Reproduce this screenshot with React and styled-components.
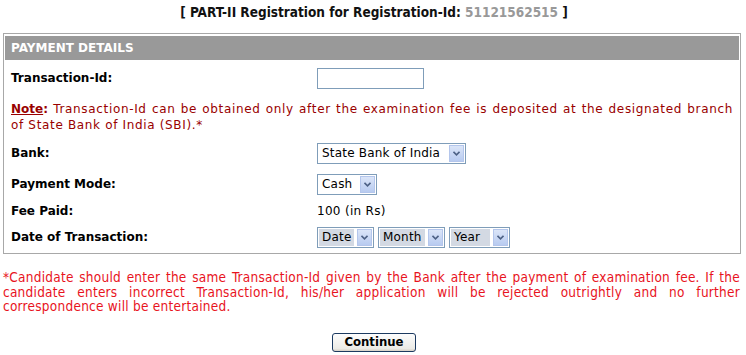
import React from "react";
import styled, { createGlobalStyle } from "styled-components";

const Global = createGlobalStyle`
  html, body { margin: 0; padding: 0; background: #fff; }
  body { font-family: "DejaVu Sans", Verdana, sans-serif; color: #000; }
`;

const Page = styled.div`
  width: 746px;
  padding: 3px 3px 0 3px;
  box-sizing: border-box;
`;

const Title = styled.div`
  text-align: center;
  font-family: "DejaVu Sans Condensed", "DejaVu Sans", sans-serif;
  font-weight: bold;
  font-size: 13.5px;
  line-height: 18px;
  color: #111;
  margin-left: 2px;
`;

const RegId = styled.span`
  color: #999;
`;

const Box = styled.div`
  margin-top: 12px;
  border: 1px solid #a8a8a8;
  padding: 2px 1px 0 1px;
  margin-right: 2px;
`;

const Header = styled.div`
  background: #999;
  color: #fff;
  font-weight: bold;
  font-size: 12px;
  height: 24px;
  line-height: 24px;
  padding-left: 6px;
`;

const Grid = styled.div`
  display: grid;
  grid-template-columns: 306px 1fr;
  padding: 5px 6px 1px 6px;
  align-items: center;
  font-size: 12px;
  letter-spacing: 0.3px;
`;

const Label = styled.div`
  font-weight: bold;
  letter-spacing: 0;
  height: ${(p) => p.$h || 26}px;
  display: flex;
  align-items: center;
`;

const Value = styled.div`
  height: ${(p) => p.$h || 26}px;
  display: flex;
  align-items: center;
  gap: 4px;
`;

const Note = styled.div`
  grid-column: 1 / -1;
  color: #990000;
  text-align: justify;
  line-height: 16px;
  letter-spacing: 0.66px;
  padding: 10px 0 5px 0;
`;

const NoteLead = styled.b`
  letter-spacing: 0;
`;

const TextInput = styled.input`
  width: 107px;
  height: 21px;
  box-sizing: border-box;
  border: 1px solid #7f9db9;
  margin: 0;
  padding: 0 2px;
`;

const SelectBox = styled.div`
  display: inline-flex;
  align-items: center;
  height: 21px;
  box-sizing: border-box;
  border: 1px solid #7f9db9;
  padding: 1px;
  background: #fff;
  font-size: 12px;
  letter-spacing: 0.2px;
  width: ${(p) => p.$w}px;
`;

const SelectText = styled.span`
  flex: 1;
  padding: 0 3px;
  line-height: 17px;
  background: ${(p) => (p.$hl ? "#d3d9e3" : "transparent")};
  margin-right: 3px;
  white-space: nowrap;
`;

const Arrow = styled.span`
  width: 15px;
  height: 17px;
  box-sizing: border-box;
  background: linear-gradient(#dbe5f8, #b8cbf0);
  border: 1px solid #b4c6ec;
  display: flex;
  align-items: center;
  justify-content: center;
`;

const Chevron = () => (
  <svg width="7" height="5" viewBox="0 0 7 5">
    <path d="M0.5 0.8 L3.5 3.8 L6.5 0.8" fill="none" stroke="#4d6185" strokeWidth="1.6" />
  </svg>
);

const Select = ({ w, children, hl }) => (
  <SelectBox $w={w}>
    <SelectText $hl={hl}>{children}</SelectText>
    <Arrow>
      <Chevron />
    </Arrow>
  </SelectBox>
);

const Footer = styled.div`
  margin-top: 16px;
  font-family: "DejaVu Sans Condensed", "DejaVu Sans", sans-serif;
  font-size: 13.5px;
  letter-spacing: 0.25px;
  line-height: 14.5px;
  color: #e8131d;
  text-align: justify;
  padding-right: 3px;
`;

const ButtonRow = styled.div`
  display: flex;
  justify-content: center;
  margin-top: 19px;
  padding-left: 2px;
`;

const Button = styled.button`
  width: 84px;
  height: 19px;
  font-family: "DejaVu Sans Condensed", "DejaVu Sans", sans-serif;
  font-weight: bold;
  font-size: 13px;
  color: #000;
  border: 1px solid #1c3a60;
  border-radius: 3px;
  background: linear-gradient(#fdfdfd, #ecebe6 85%, #d6d0c5);
  padding: 0;
  line-height: 16px;
`;

export default function App() {
  return (
    <Page>
      <Global />
      <Title>
        [ PART-II Registration for Registration-Id: <RegId>51121562515</RegId> ]
      </Title>
      <Box>
        <Header>PAYMENT DETAILS</Header>
        <Grid>
          <Label $h={26}>Transaction-Id:</Label>
          <Value $h={26}>
            <TextInput type="text" />
          </Value>
          <Note>
            <NoteLead><u>Note</u>:</NoteLead> Transaction-Id can be obtained only after the examination fee is deposited at the designated branch of State Bank of India (SBI).*
          </Note>
          <Label $h={30}>Bank:</Label>
          <Value $h={30}>
            <Select w={149}>State Bank of India</Select>
          </Value>
          <Label $h={32}>Payment Mode:</Label>
          <Value $h={32}>
            <Select w={60}>Cash</Select>
          </Value>
          <Label $h={22}>Fee Paid:</Label>
          <Value $h={22}>100 (in Rs)</Value>
          <Label $h={30}>Date of Transaction:</Label>
          <Value $h={30}>
            <Select w={57} hl>Date</Select>
            <Select w={67} hl>Month</Select>
            <Select w={61} hl>Year</Select>
          </Value>
        </Grid>
      </Box>
      <Footer>
        *Candidate should enter the same Transaction-Id given by the Bank after the payment of examination fee. If the candidate enters incorrect Transaction-Id, his/her application will be rejected outrightly and no further correspondence will be entertained.
      </Footer>
      <ButtonRow>
        <Button>Continue</Button>
      </ButtonRow>
    </Page>
  );
}
